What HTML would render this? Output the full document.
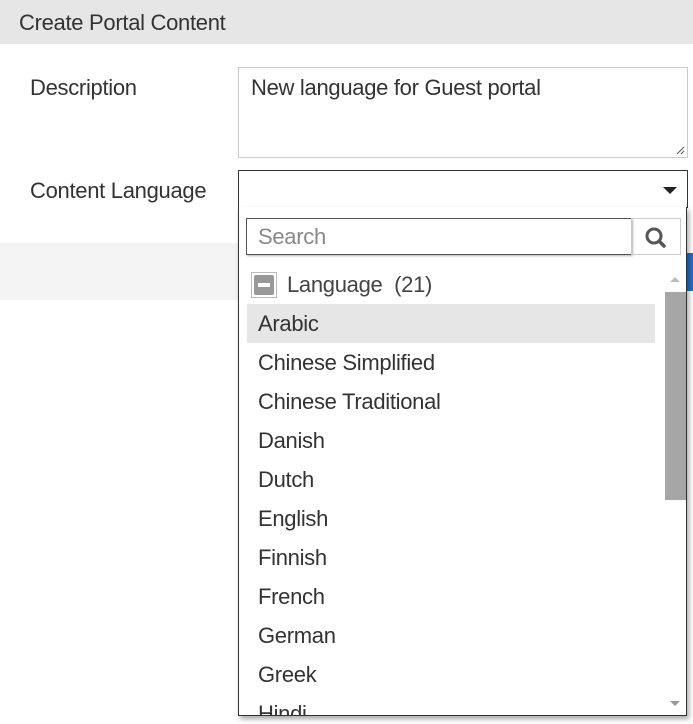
<!DOCTYPE html>
<html><head><style>
body{margin:0;width:693px;height:724px;overflow:hidden;background:#fff;font-family:"Liberation Sans",sans-serif;color:#333;position:relative}
.hdr{position:absolute;left:0;top:0;width:693px;height:44px;background:#e6e6e6;font-size:22px;line-height:46px;padding-left:19px;box-sizing:border-box;color:#333;letter-spacing:-0.3px}
.lbl{position:absolute;left:30px;font-size:22px;color:#333;letter-spacing:-0.3px}
.ta{position:absolute;left:238px;top:67px;width:450px;height:91px;border:1px solid #ccc;box-sizing:border-box;font-size:22px;padding:7px 12px;letter-spacing:-0.3px}
.band{position:absolute;left:0;top:243px;width:238px;height:57px;background:#f4f4f4}
.blue{position:absolute;left:687px;top:253px;width:6px;height:38px;background:#2a6ebb}
.sel{position:absolute;left:238px;top:170px;width:450px;height:38px;border:1px solid #333;border-bottom:none;box-sizing:border-box;background:#fff}
.arr{position:absolute;right:10px;top:16px;width:0;height:0;border-left:7px solid transparent;border-right:7px solid transparent;border-top:7px solid #222}
.dd{position:absolute;left:238px;top:207px;width:449px;height:509px;border:1px solid #333;border-top:none;box-sizing:border-box;background:#fff;box-shadow:2px 3px 5px rgba(0,0,0,.35);overflow:hidden}
.search{position:absolute;left:7px;top:11px;width:386px;height:37px;border:1px solid #555;box-sizing:border-box;font-size:22px;color:#888;padding:5px 11px;box-shadow:1px 1px 2px rgba(0,0,0,.3);letter-spacing:-0.3px}
.sbtn{position:absolute;left:392px;top:11px;width:50px;height:37px;border:1px solid #ccc;box-sizing:border-box}
.grp{position:absolute;left:48px;top:65px;font-size:22px;color:#444;letter-spacing:-0.3px}
.cb{position:absolute;left:12px;top:65px;width:26px;height:26px;border:1px solid #bbb;box-sizing:border-box}
.cb i{position:absolute;left:2px;top:2px;width:20px;height:20px;background:#999;border-radius:2px}
.cb b{position:absolute;left:6px;top:10px;width:12px;height:4px;background:#fff}
.item{position:absolute;left:8px;width:408px;height:39px;line-height:40px;font-size:22px;padding-left:11px;box-sizing:border-box;color:#333;letter-spacing:-0.3px}
.thumb{position:absolute;left:426px;top:85px;width:21px;height:208px;background:#a6a6a6}
</style></head><body>
<div class="hdr">Create Portal Content</div>
<div class="lbl" style="top:75px">Description</div>
<div class="ta">New language for Guest portal
<svg style="position:absolute;right:2px;bottom:2px" width="10" height="10"><path d="M2 9L9 2M6 9L9 6" stroke="#555" stroke-width="1"/></svg></div>
<div class="lbl" style="top:178px">Content Language</div>
<div class="band"></div>
<div class="blue"></div>
<div class="sel"><div class="arr"></div></div>
<div class="dd">
<div class="search">Search</div>
<div class="sbtn"><svg width="50" height="37" viewBox="0 0 50 37"><circle cx="22" cy="17" r="7" fill="none" stroke="#555" stroke-width="3"/><path d="M27 22L32 27" stroke="#555" stroke-width="3.5" stroke-linecap="round"/></svg></div>
<div class="cb"><i></i><b></b></div>
<div class="grp">Language&nbsp;&nbsp;(21)</div>
<div class="item" style="top:97px;background:#e6e6e6">Arabic</div>
<div class="item" style="top:136px">Chinese Simplified</div>
<div class="item" style="top:175px">Chinese Traditional</div>
<div class="item" style="top:214px">Danish</div>
<div class="item" style="top:253px">Dutch</div>
<div class="item" style="top:292px">English</div>
<div class="item" style="top:331px">Finnish</div>
<div class="item" style="top:370px">French</div>
<div class="item" style="top:409px">German</div>
<div class="item" style="top:448px">Greek</div>
<div class="item" style="top:487px">Hindi</div>
<div style="position:absolute;left:431px;top:70px;border-left:5px solid transparent;border-right:5px solid transparent;border-bottom:5px solid #bbb"></div>
<div class="thumb"></div>
<div style="position:absolute;left:431px;top:494px;border-left:5px solid transparent;border-right:5px solid transparent;border-top:5px solid #999"></div>
</div>
</body></html>
